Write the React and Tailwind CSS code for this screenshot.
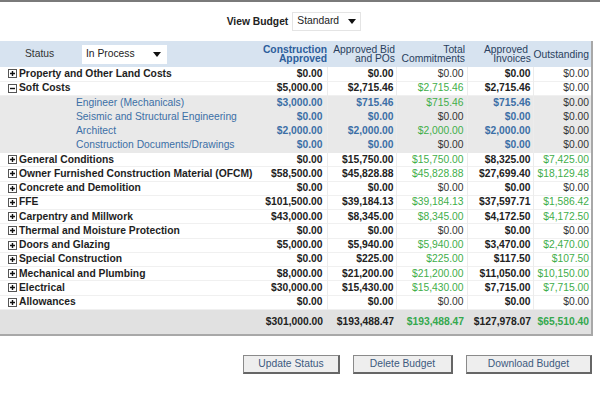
import React from "react";

const rows = [
  { name: "Property and Other Land Costs", icon: "plus", v: ["$0.00", "$0.00", "$0.00", "$0.00", "$0.00"] },
  { name: "Soft Costs", icon: "minus", v: ["$5,000.00", "$2,715.46", "$2,715.46", "$2,715.46", "$0.00"], g: [2] },
  { name: "Engineer (Mechanicals)", sub: true, v: ["$3,000.00", "$715.46", "$715.46", "$715.46", "$0.00"], g: [2] },
  { name: "Seismic and Structural Engineering", sub: true, v: ["$0.00", "$0.00", "$0.00", "$0.00", "$0.00"] },
  { name: "Architect", sub: true, v: ["$2,000.00", "$2,000.00", "$2,000.00", "$2,000.00", "$0.00"], g: [2] },
  { name: "Construction Documents/Drawings", sub: true, v: ["$0.00", "$0.00", "$0.00", "$0.00", "$0.00"] },
  { name: "General Conditions", icon: "plus", v: ["$0.00", "$15,750.00", "$15,750.00", "$8,325.00", "$7,425.00"], g: [2, 4] },
  { name: "Owner Furnished Construction Material (OFCM)", icon: "plus", v: ["$58,500.00", "$45,828.88", "$45,828.88", "$27,699.40", "$18,129.48"], g: [2, 4] },
  { name: "Concrete and Demolition", icon: "plus", v: ["$0.00", "$0.00", "$0.00", "$0.00", "$0.00"] },
  { name: "FFE", icon: "plus", v: ["$101,500.00", "$39,184.13", "$39,184.13", "$37,597.71", "$1,586.42"], g: [2, 4] },
  { name: "Carpentry and Millwork", icon: "plus", v: ["$43,000.00", "$8,345.00", "$8,345.00", "$4,172.50", "$4,172.50"], g: [2, 4] },
  { name: "Thermal and Moisture Protection", icon: "plus", v: ["$0.00", "$0.00", "$0.00", "$0.00", "$0.00"] },
  { name: "Doors and Glazing", icon: "plus", v: ["$5,000.00", "$5,940.00", "$5,940.00", "$3,470.00", "$2,470.00"], g: [2, 4] },
  { name: "Special Construction", icon: "plus", v: ["$0.00", "$225.00", "$225.00", "$117.50", "$107.50"], g: [2, 4] },
  { name: "Mechanical and Plumbing", icon: "plus", v: ["$8,000.00", "$21,200.00", "$21,200.00", "$11,050.00", "$10,150.00"], g: [2, 4] },
  { name: "Electrical", icon: "plus", v: ["$30,000.00", "$15,430.00", "$15,430.00", "$7,715.00", "$7,715.00"], g: [2, 4] },
  { name: "Allowances", icon: "plus", v: ["$0.00", "$0.00", "$0.00", "$0.00", "$0.00"] },
];

const Toggle = ({ type }) => (
  <svg width="9" height="9" viewBox="0 0 9 9" className="shrink-0 mr-[2px]">
    <rect x="0.5" y="0.5" width="8" height="8" fill="#fff" stroke="#555" />
    <path d={type === "plus" ? "M2 4.5h5M4.5 2v5" : "M2 4.5h5"} stroke="#111" strokeWidth="1.4" />
  </svg>
);

const Arrow = () => (
  <svg width="8" height="5" viewBox="0 0 8 5">
    <path d="M0 0h8L4 5z" fill="#111" />
  </svg>
);

const boldCols = [0, 1, 3];
const colPad = ["pr-[4px]", "pr-[2px]", "pr-[3px]", "pr-[2px]", "pr-[2px]"];

const ValueCell = ({ value, i, row }) => {
  const green = row.g && row.g.includes(i);
  let color = "text-[#222]";
  if (green) color = "text-[#3fae4a]";
  else if (row.sub && boldCols.includes(i)) color = "text-[#3c6fa6]";
  else if (!boldCols.includes(i)) color = "text-[#333]";
  const weight = boldCols.includes(i) && !green ? "font-bold" : "font-normal";
  return (
    <td className={`text-right whitespace-nowrap ${colPad[i]} ${i > 0 ? "border-l border-[#ececec]" : ""} ${color} ${weight}`}>
      {value}
    </td>
  );
};

export default function App() {
  return (
    <div className="w-[600px] h-[399px] bg-white border-t-2 border-[#7a7a7a] text-[10.3px] leading-[12px] overflow-hidden" style={{ fontFamily: '"Liberation Sans", Arial, sans-serif' }}>
      <div className="flex items-center justify-center h-[37px] pr-[12px]">
        <span className="font-bold text-[#222] mr-[4px] mt-[3px]">View Budget</span>
        <div className="flex items-center justify-between w-[69px] h-[19px] mt-[1px] px-[4px] bg-white border border-[#e4e4e4] text-[#222]">
          <span>Standard</span>
          <Arrow />
        </div>
      </div>

      <div className="w-[593px] border-r-2 border-b-2 border-[#a8a8a8] mt-[2px]">
        <table className="table-fixed border-collapse w-[591px]">
          <colgroup>
            <col className="w-[258px]" />
            <col className="w-[69px]" />
            <col className="w-[69px]" />
            <col className="w-[71px]" />
            <col className="w-[66px]" />
            <col className="w-[58px]" />
          </colgroup>
          <thead>
            <tr className="h-[26px] bg-[#d7e3f0] text-[#2a3f5e] leading-[9.5px]">
              <th className="text-left font-normal">
                <div className="flex items-center leading-[12px]">
                  <span className="ml-[25px] w-[57px] text-[#333]">Status</span>
                  <div className="flex items-center justify-between w-[85px] h-[19px] pl-[4px] pr-[6px] bg-white text-[#222]">
                    <span>In Process</span>
                    <Arrow />
                  </div>
                </div>
              </th>
              <th className="text-right font-bold text-[#2d5e9c] whitespace-nowrap pr-0">
                <div>Construction</div>
                <div>Approved</div>
              </th>
              <th className="text-right font-normal whitespace-nowrap pr-[1px]">
                <div>Approved Bid</div>
                <div>and POs</div>
              </th>
              <th className="text-right font-normal whitespace-nowrap pr-[2px]">
                <div>Total</div>
                <div>Commitments</div>
              </th>
              <th className="text-right font-normal whitespace-nowrap pr-[2px]">
                <div className="pr-[3px]">Approved</div>
                <div>Invoices</div>
              </th>
              <th className="text-right font-normal whitespace-nowrap pr-[2px]">
                <div className="pt-[1px]">Outstanding</div>
              </th>
            </tr>
          </thead>
          <tbody>
            {rows.map((row) => (
              <tr key={row.name} className={`h-[14.25px] border-b ${row.sub ? "bg-[#e9e9e9] border-[#e9e9e9]" : "bg-white border-[#f0f0f0]"}`}>
                <td className="whitespace-nowrap p-0">
                  {row.sub ? (
                    <span className="pl-[76px] text-[#3c6fa6]">{row.name}</span>
                  ) : (
                    <span className="flex items-center font-bold text-[#1e1e1e] pl-[8px]">
                      <Toggle type={row.icon} />
                      {row.name}
                    </span>
                  )}
                </td>
                {row.v.map((value, i) => (
                  <ValueCell key={i} value={value} i={i} row={row} />
                ))}
              </tr>
            ))}
            <tr className="h-[25px] bg-[#e1e1e1] font-bold">
              <td />
              <td className="text-right whitespace-nowrap pr-[4px] text-[#222]">$301,000.00</td>
              <td className="text-right whitespace-nowrap pr-[2px] text-[#222]">$193,488.47</td>
              <td className="text-right whitespace-nowrap pr-[3px] text-[#35a84e]">$193,488.47</td>
              <td className="text-right whitespace-nowrap pr-[2px] text-[#222]">$127,978.07</td>
              <td className="text-right whitespace-nowrap pr-[2px] text-[#35a84e]">$65,510.40</td>
            </tr>
          </tbody>
        </table>
      </div>

      <div className="flex justify-end gap-[13px] w-[592px] mt-[19px] text-[#3d5a7e]">
        <button className="w-[97px] h-[19px] bg-[#eeeeee] border border-[#8a8a8a] border-r-2 border-b-2 border-r-[#666] border-b-[#666]">Update Status</button>
        <button className="w-[100px] h-[19px] bg-[#eeeeee] border border-[#8a8a8a] border-r-2 border-b-2 border-r-[#666] border-b-[#666]">Delete Budget</button>
        <button className="w-[126px] h-[19px] bg-[#eeeeee] border border-[#8a8a8a] border-r-2 border-b-2 border-r-[#666] border-b-[#666]">Download Budget</button>
      </div>
    </div>
  );
}
